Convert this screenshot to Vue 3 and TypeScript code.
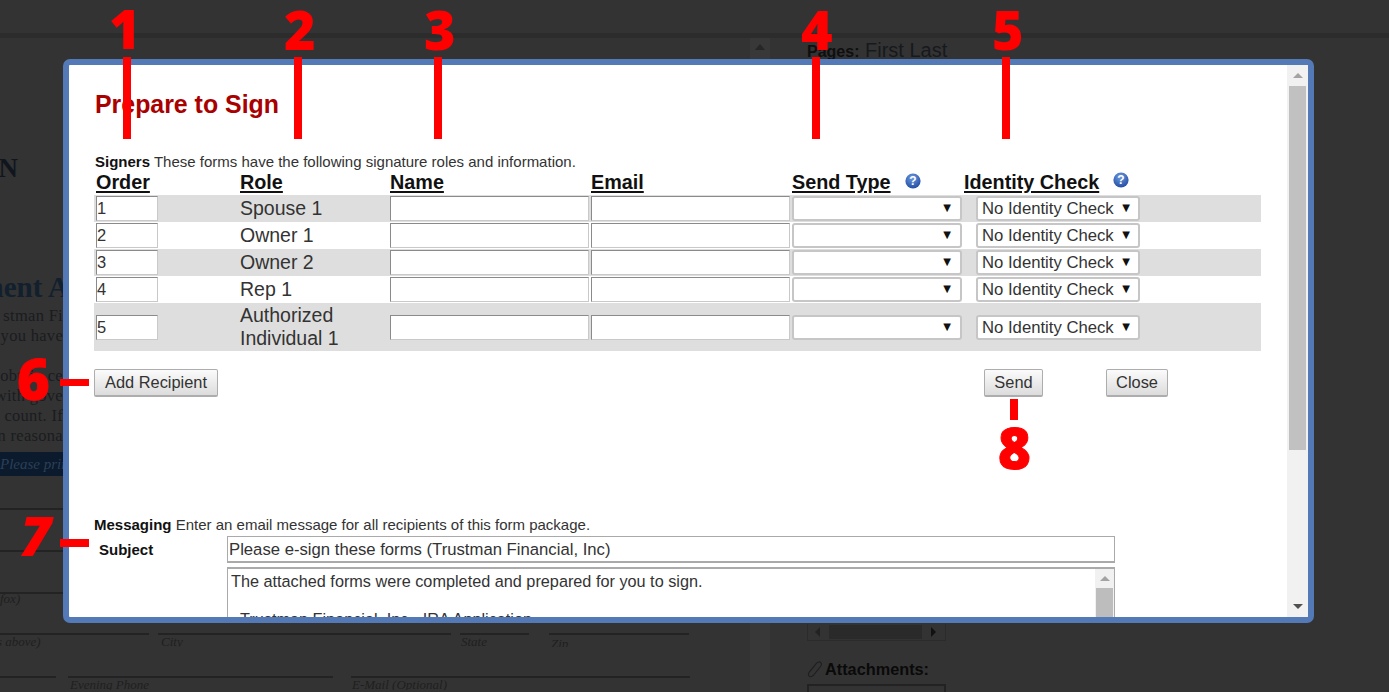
<script setup lang="ts">
interface Signer { order: number; role: string }
const signers: Signer[] = [
  { order: 1, role: 'Spouse 1' },
  { order: 2, role: 'Owner 1' },
  { order: 3, role: 'Owner 2' },
  { order: 4, role: 'Rep 1' },
  { order: 5, role: 'Authorized Individual 1' },
]
const digits = ['1', '2', '3', '4', '5', '6', '7', '8']
const message = 'The attached forms were completed and prepared for you to sign.\n\n  Trustman Financial, Inc - IRA Application'
</script>

<template>
  <div class="page">
    <div class="backdrop">
      <div class="topbar"></div>
      <div class="under">
        <div class="doc">
          <div class="frag f-n"><span>N</span></div>
          <div class="frag f-head"><span>ment A</span></div>
          <div class="frag f-p"><span>stman Fi</span></div>
          <div class="frag f-p"><span>you have</span></div>
          <div class="frag f-p f-gap"><span>obtain ce</span></div>
          <div class="frag f-p"><span>with gove</span></div>
          <div class="frag f-p"><span>count. If</span></div>
          <div class="frag f-p"><span>n reasona</span></div>
          <div class="frag f-band"><span>Please prin</span></div>
          <div class="rule r1"></div>
          <div class="rule r2"></div>
          <div class="rule r3"><span class="lab fox">fox)</span></div>
          <div class="rowline rl1">
            <div class="cell c1"><span class="lab">s above)</span></div>
            <div class="cell c2"><span class="lab">City</span></div>
            <div class="cell c3"><span class="lab">State</span></div>
            <div class="cell c4"><span class="lab zip">Zip</span></div>
          </div>
          <div class="rowline rl2">
            <div class="cell c5"></div>
            <div class="cell c6"><span class="lab">Evening Phone</span></div>
            <div class="cell c7"><span class="lab">E-Mail (Optional)</span></div>
          </div>
        </div>
        <div class="docbar"><i class="docbar-up"></i></div>
        <div class="side">
          <div class="pages"><b>Pages:</b> <span>First Last</span></div>
          <div class="hbar"><i class="harrow hl"></i><i class="hthumb"></i><i class="harrow hr"></i></div>
          <div class="attach">
            <svg class="clip" viewBox="0 0 16 18" width="16" height="18" aria-hidden="true">
              <path d="M3.2 11.2 9.6 3.2c1.2-1.5 3-1.6 4-.7s1 2.6-.1 4L6.8 14.8c-1.7 2-3.600 2.300-4.600 1.400s-1-2.800.6-4.800L8.800 4" fill="none" stroke="#1f1f1f" stroke-width="1.100"/>
            </svg>
            <b>Attachments:</b>
          </div>
          <div class="attach-box"></div>
        </div>
      </div>
    </div>

    <div class="modal">
      <div class="content">
        <h1 class="title">Prepare to Sign</h1>
        <p class="intro"><b>Signers</b> These forms have the following signature roles and information.</p>
        <table class="signers">
          <colgroup>
            <col class="w-order" /><col class="w-role" /><col class="w-field" /><col class="w-field" /><col class="w-send" /><col class="w-check" />
          </colgroup>
          <thead>
            <tr>
              <th><span class="hd hd-order">Order</span></th>
              <th><span class="hd">Role</span></th>
              <th><span class="hd">Name</span></th>
              <th><span class="hd">Email</span></th>
              <th>
                <span class="hd hd-send">Send Type</span>
                <svg class="help" viewBox="0 0 16 16" width="16" height="16" aria-hidden="true">
                  <defs>
                    <radialGradient id="hg" cx="45%" cy="30%" r="75%">
                      <stop offset="0" stop-color="#6f9be0" />
                      <stop offset="1" stop-color="#1d489f" />
                    </radialGradient>
                  </defs>
                  <circle cx="8" cy="8" r="7.6" fill="url(#hg)" />
                  <text x="8" y="12.300" text-anchor="middle" class="q">?</text>
                </svg>
              </th>
              <th>
                <span class="hd">Identity Check</span>
                <svg class="help help-b" viewBox="0 0 16 16" width="16" height="16" aria-hidden="true">
                  <circle cx="8" cy="8" r="7.6" fill="url(#hg)" />
                  <text x="8" y="12.300" text-anchor="middle" class="q">?</text>
                </svg>
              </th>
            </tr>
          </thead>
          <tbody>
            <tr v-for="s in signers" :key="s.order" :class="{ tall: s.order === 5 }">
              <td><input class="field order" type="text" :value="s.order" /></td>
              <td class="role">{{ s.role }}</td>
              <td><input class="field wide" type="text" /></td>
              <td><input class="field wide" type="text" /></td>
              <td><span class="sel sel-send"><select><option></option></select></span></td>
              <td><span class="sel sel-check"><select><option>No Identity Check</option></select></span></td>
            </tr>
          </tbody>
        </table>
        <div class="actions">
          <button class="btn" type="button">Add Recipient</button>
          <button class="btn send" type="button">Send</button>
          <button class="btn close" type="button">Close</button>
        </div>
        <p class="intro messaging"><b>Messaging</b> Enter an email message for all recipients of this form package.</p>
        <div class="subject-row">
          <label class="subject-label">Subject</label>
          <input class="subject" type="text" value="Please e-sign these forms (Trustman Financial, Inc)" />
        </div>
        <div class="textarea">
          <div class="ta-text">{{ message }}</div>
          <div class="ta-bar"><i class="arrow-up small"></i><i class="ta-thumb"></i></div>
        </div>
      </div>
      <div class="scrollbar">
        <i class="arrow-up"></i>
        <i class="thumb"></i>
        <i class="arrow-down"></i>
      </div>
    </div>

    <span v-for="(d, i) in digits" :key="d" class="digit" :class="'d' + (i + 1)">{{ d }}</span>
    <i class="mark m1"></i><i class="mark m2"></i><i class="mark m3"></i><i class="mark m4"></i>
    <i class="mark m5"></i><i class="mark m6"></i><i class="mark m7"></i><i class="mark m8"></i>
  </div>
</template>

<style>
html, body { margin: 0; background: #333; }
</style>

<style scoped>
.page {
  position: relative;
  width: 1389px;
  height: 692px;
  overflow: hidden;
  background: #333;
  font-family: "Liberation Sans", Arial, sans-serif;
  color: #222;
}

/* dimmed document behind the dialog */
.backdrop { height: 692px; display: flex; flex-direction: column; }
.topbar { height: 33px; border-bottom: 5px solid #2c2c2c; flex: none; }
.under { flex: 1; display: flex; min-height: 0; }
.doc { width: 750px; flex: none; font-family: "Liberation Serif", serif; color: #1a1c1f; padding-top: 115px; box-sizing: border-box; }
.frag { width: 63px; display: flex; justify-content: flex-end; overflow: hidden; white-space: nowrap; }
.f-n { width: 18px; font-size: 27px; font-weight: 700; height: 30px; line-height: 30px; color: #11161e; }
.f-head { margin-top: 89px; font-size: 29px; font-weight: 700; height: 30px; line-height: 30px; color: #12202e; }
.f-head span { margin-right: -6px; }
.f-p { font-size: 16.500px; height: 20px; line-height: 20px; margin-top: 0; letter-spacing: .3px; }
.f-head + .f-p { margin-top: 4px; }
.f-gap { margin-top: 20px; }
.f-band { margin-top: 6px; height: 24px; line-height: 24px; background: #0b1a2c; color: #2a4058; font-style: italic; font-size: 15px; justify-content: flex-start; }
.rule { width: 63px; height: 2px; background: #232323; margin-top: 40px; position: relative; }
.r1 { margin-top: 32px; }
.lab { font-style: italic; font-size: 13px; color: #1f1f1f; line-height: 14px; white-space: nowrap; display: block; }
.fox { position: absolute; left: 0; top: 0; }
.rowline { display: flex; margin-top: 39px; }
.rl2 { margin-top: 27px; }
.cell { border-top: 2px solid #232323; height: 14px; flex: none; overflow: hidden; }
.c1 { width: 149px; margin-right: 9px; }
.c1 .lab { margin-left: -3px; }
.c2 { width: 293px; margin-right: 9px; padding-left: 3px; box-sizing: border-box; }
.c3 { width: 69px; margin-right: 20px; padding-left: 1px; box-sizing: border-box; }
.c4 { width: 140px; padding-left: 2px; box-sizing: border-box; }
.zip { margin-top: 2px; }
.c5 { width: 56px; margin-right: 12px; }
.c6 { width: 265px; margin-right: 18px; padding-left: 2px; box-sizing: border-box; }
.c7 { width: 339px; padding-left: 1px; box-sizing: border-box; }
.docbar { width: 20px; background: #383838; flex: none; padding-top: 6px; box-sizing: border-box; display: flex; justify-content: center; }
.docbar-up { width: 0; height: 0; border: 5px solid transparent; border-top: 0; border-bottom: 6px solid #262626; }
.side { padding: 1px 0 0 37px; flex: 1; color: #111; }
.pages { font-size: 20px; line-height: 22px; color: #16191d; }
.pages b { font-size: 16px; color: #0f0f0f; }
.hbar { margin-top: 561px; width: 139px; height: 17px; box-sizing: border-box; border: 1px solid #2b2b2b; border-top: 0; display: flex; align-items: center; justify-content: space-between; padding: 0 9px 0 7px; }
.hthumb { width: 93px; height: 14px; background: #2a2a2a; }
.harrow { width: 0; height: 0; border: 5px solid transparent; }
.hl { border-left: 0; border-right: 5px solid #222; }
.hr { border-right: 0; border-left: 5px solid #111; }
.attach { margin-top: 18px; display: flex; align-items: center; gap: 2px; font-size: 16.300px; height: 20px; color: #0a0a0a; }
.clip { flex: none; }
.attach-box { margin-top: 5px; width: 139px; height: 20px; box-sizing: border-box; border: 2px solid #222; border-bottom: 0; }

/* dialog */
.modal {
  position: absolute;
  left: 63px;
  top: 59px;
  width: 1251px;
  height: 564px;
  box-sizing: border-box;
  border: 6px solid #537ab6;
  border-radius: 7px;
  background: #fff;
  display: flex;
  overflow: hidden;
}
.content { flex: 1; min-width: 0; padding: 0 0 0 25px; overflow: hidden; }
.title { margin: 25px 0 0 1px; font-size: 24.900px; line-height: 29px; font-weight: 700; color: #a90000; }
.intro { margin: 35px 0 0 1px; font-size: 15px; line-height: 16px; color: #333; white-space: nowrap; }
.intro b { color: #111; }
.signers { margin-top: 1px; width: 1167px; border-collapse: collapse; table-layout: fixed; }
.w-order { width: 146px; }
.w-role { width: 150px; }
.w-field { width: 201px; }
.w-send { width: 172px; }
.w-check { width: 297px; }
th { padding: 0; height: 24px; text-align: left; font-size: 19.800px; font-weight: 700; color: #111; white-space: nowrap; vertical-align: top; line-height: 23px; }
.hd { text-decoration: underline; text-underline-offset: 2px; text-decoration-thickness: 2px; }
.hd-order { margin-left: 2px; }
.hd-send { margin-left: 0; }
.help { vertical-align: top; margin: 2px 0 0 14px; }
.help-b { margin-left: 14px; margin-top: 1px; }
.q { font: 700 12px "Liberation Sans", sans-serif; fill: #fff; }
td { padding: 0; height: 27px; vertical-align: middle; font-size: 19.500px; color: #333; }
tbody tr:nth-child(odd) { background: #dedede; }
tr.tall td { height: 48px; }
.role { line-height: 23px; }
.field {
  display: block;
  box-sizing: border-box;
  height: 25px;
  padding: 0;
  font: 16.500px "Liberation Sans", sans-serif;
  color: #333;
  background: #fff;
  border-style: solid;
  border-width: 1px;
  border-color: #8a8a8a #c9c9c9 #c9c9c9 #8a8a8a;
  border-top-width: 1.500px;
  outline: none;
}
.order { width: 62px; margin-left: 2px; }
.wide { width: 199px; }
.sel { display: block; position: relative; height: 25px; }
.sel select {
  appearance: none;
  display: block;
  width: 100%;
  height: 25px;
  box-sizing: border-box;
  padding: 0 0 0 4px;
  font: 16.700px "Liberation Sans", sans-serif;
  color: #333;
  background: #fff;
  border: 2px solid #c6c6c6;
  border-radius: 3px;
  outline: none;
}
.sel::after { content: "▼"; position: absolute; top: 5px; font: 10px "DejaVu Sans", sans-serif; line-height: 14px; color: #111; }
.sel-send { width: 170px; }
.sel-send::after { right: 11px; }
.sel-check { width: 164px; margin-left: 12px; }
.sel-check::after { right: 10px; }
.actions { display: flex; margin-top: 18px; }
.btn {
  box-sizing: border-box;
  height: 28px;
  padding: 0;
  font: 16.400px "Liberation Sans", sans-serif;
  color: #333;
  background: linear-gradient(#fbfbfb, #dcdcdc);
  border: 1px solid #adadad;
  border-bottom: 2px solid #adadad;
  border-radius: 2px;
  width: 124px;
}
.send { width: 59px; margin-left: 766px; }
.close { width: 62px; margin-left: 63px; }
.messaging { margin: 120px 0 0; }
.subject-row { display: flex; align-items: center; margin-top: 3px; }
.subject-label { width: 133px; padding-left: 5px; box-sizing: border-box; font-size: 15px; font-weight: 700; color: #111; flex: none; }
.subject {
  box-sizing: border-box;
  width: 888px;
  height: 27px;
  padding: 1px 1px 0;
  border: 1px solid #aaa;
  border-bottom-width: 2px;
  font: 16.700px "Liberation Sans", sans-serif;
  color: #333;
  outline: none;
}
.textarea {
  box-sizing: border-box;
  margin: 4px 0 0 133px;
  width: 888px;
  height: 110px;
  border: 1px solid #aaa;
  border-top-width: 2px;
  display: flex;
}
.ta-text { flex: 1; padding: 3px 3px; font-size: 16.250px; line-height: 19px; color: #333; white-space: pre-wrap; }
.ta-bar { width: 19px; background: #f1f1f1; flex: none; display: flex; flex-direction: column; align-items: center; padding-top: 7px; box-sizing: border-box; }
.ta-thumb { margin-top: 7px; width: 17px; flex: 1; background: #bdbdbd; }
.scrollbar { width: 21px; flex: none; background: #f1f1f1; display: flex; flex-direction: column; align-items: center; padding-top: 8px; box-sizing: border-box; }
.arrow-up { width: 0; height: 0; border: 5px solid transparent; border-top: 0; border-bottom: 5px solid #a3a3a3; flex: none; }
.arrow-up.small { border-bottom-color: #a3a3a3; }
.thumb { margin-top: 8px; width: 17px; height: 364px; background: #c1c1c1; flex: none; }
.arrow-down { margin-top: auto; margin-bottom: 8px; width: 0; height: 0; border: 5px solid transparent; border-bottom: 0; border-top: 5px solid #505050; flex: none; }

/* red annotations */
.digit { position: absolute; font: 800 54px/56px "Open Sans", sans-serif; color: #f00; }
.d1 { left: 109px; top: 0; }
.d2 { left: 284px; top: 1px; }
.d3 { left: 424px; top: 1px; }
.d4 { left: 801px; top: 1px; }
.d5 { left: 992px; top: 1px; }
.d6 { left: 17px; top: 350px; font-size: 56px; -webkit-text-stroke: .8px #f00; }
.d7 { left: 20px; top: 507px; font-style: italic; }
.d8 { left: 998px; top: 419px; font-size: 56px; -webkit-text-stroke: 1px #f00; }
.mark { position: absolute; background: #f00; }
.m1, .m2, .m3, .m4, .m5 { top: 57px; width: 8px; height: 82px; }
.m1 { left: 123px; }
.m2 { left: 294px; }
.m3 { left: 434px; }
.m4 { left: 812px; }
.m5 { left: 1002px; }
.m6 { left: 60px; top: 379px; width: 29px; height: 7px; }
.m7 { left: 60px; top: 539px; width: 29px; height: 8px; }
.m8 { left: 1010px; top: 399px; width: 8px; height: 21px; }
</style>
